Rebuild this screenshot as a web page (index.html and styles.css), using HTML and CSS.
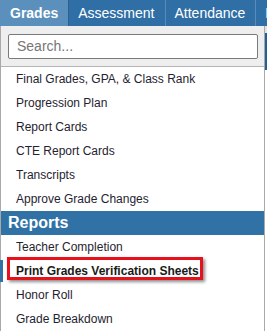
FILE: index.html
```html
<!DOCTYPE html>
<html>
<head>
<meta charset="utf-8">
<link rel="stylesheet" href="styles.css">
</head>
<body>
<div class="nav">
  <div class="tab active">Grades</div>
  <div class="tab">Assessment</div>
  <div class="tab">Attendance</div>
  <div class="tab">Health</div>
</div>
<div class="row">
  <div class="panel">
    <div class="search-area">
      <div class="search">Search...</div>
    </div>
    <div class="item">Final Grades, GPA, &amp; Class Rank</div>
    <div class="item">Progression Plan</div>
    <div class="item">Report Cards</div>
    <div class="item">CTE Report Cards</div>
    <div class="item">Transcripts</div>
    <div class="item">Approve Grade Changes</div>
    <div class="header">Reports</div>
    <div class="item">Teacher Completion</div>
    <div class="item selected">Print Grades Verification Sheets<span class="marker"></span><span class="highlight"></span></div>
    <div class="item">Honor Roll</div>
    <div class="item">Grade Breakdown</div>
  </div>
  <div class="side">
    <div class="side-top"></div>
    <div class="side-blue"></div>
  </div>
</div>
</body>
</html>
```
FILE: styles.css
```css
html, body {
  margin: 0;
  padding: 0;
  background: #ffffff;
  font-family: "Liberation Sans", Arial, sans-serif;
}
.nav {
  display: flex;
  height: 26px;
  width: 267px;
  background: #2f6fa6;
  overflow: hidden;
}
.tab {
  padding: 0 10px 0 9px;
  line-height: 26px;
  font-size: 14px;
  color: #ffffff;
  white-space: nowrap;
  border-right: 1px solid #5b8cb8;
}
.tab.active {
  padding-left: 10px;
  background: #5b90bd;
  font-weight: bold;
  border-right-color: #2a6196;
}
.row {
  display: flex;
}
.panel {
  width: 265px;
  box-sizing: border-box;
  border-left: 1px solid #a9a9a9;
  border-right: 1px solid #a9a9a9;
  background: #ffffff;
}
.search-area {
  background: #eeeeee;
  padding: 8px 6px 7px 7px;
  border-bottom: 1px solid #b5b5b5;
}
.search {
  height: 25px;
  box-sizing: border-box;
  border: 1px solid #7a7a7a;
  border-radius: 2px;
  background: #ffffff;
  font-size: 14px;
  line-height: 23px;
  color: #767676;
  padding-left: 8px;
}
.item {
  position: relative;
  height: 24px;
  line-height: 24px;
  padding-left: 15px;
  font-size: 12px;
  color: #1f2330;
  white-space: nowrap;
}
.item.selected {
  font-weight: bold;
  color: #1a1a1a;
}
.header {
  height: 24px;
  line-height: 24px;
  padding-left: 7px;
  background: #3072a6;
  color: #ffffff;
  font-size: 16px;
  font-weight: bold;
}
.marker {
  position: absolute;
  left: -1px;
  top: 1px;
  width: 3px;
  height: 22px;
  background: #3072a6;
}
.highlight {
  position: absolute;
  left: 6px;
  top: -2px;
  width: 196px;
  height: 23px;
  box-sizing: border-box;
  border: 3px solid #e8101a;
  box-shadow: 2px 2px 3px rgba(0, 0, 0, 0.45);
}
.side {
  flex: 1;
}
.side-top {
  height: 7px;
  background: #e4e4e4;
}
.side-blue {
  height: 37px;
  background: #245f95;
}
```
